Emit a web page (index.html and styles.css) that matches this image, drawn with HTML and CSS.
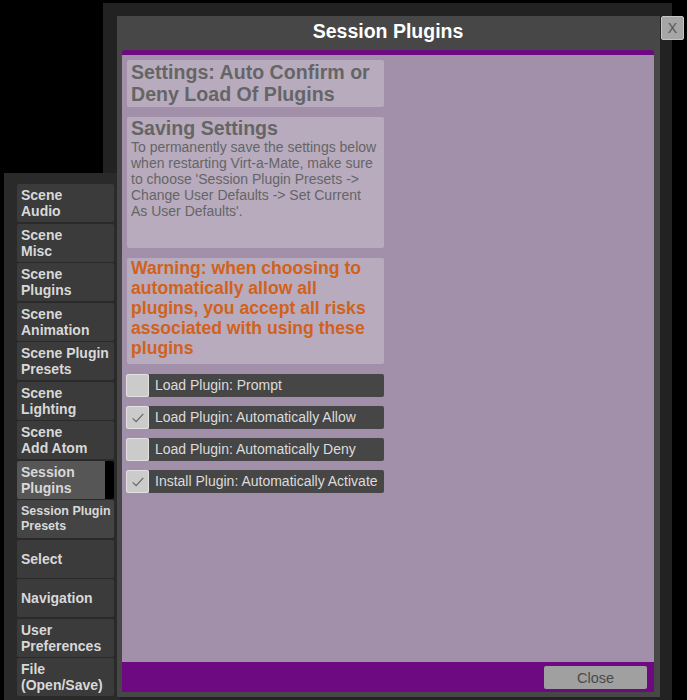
FILE: index.html
```html
<!DOCTYPE html>
<html lang="en">

<head>
    <meta charset="UTF-8">
    <title>Session Plugins</title>
    <link rel="stylesheet" href="styles.css">
</head>

<body>
    <div class="back-panel"></div>

    <nav class="side-panel">
        <button class="tab">Scene<br>Audio</button>
        <button class="tab">Scene<br>Misc</button>
        <button class="tab">Scene<br>Plugins</button>
        <button class="tab">Scene<br>Animation</button>
        <button class="tab">Scene Plugin<br>Presets</button>
        <button class="tab">Scene<br>Lighting</button>
        <button class="tab">Scene<br>Add Atom</button>
        <button class="tab active">Session<br>Plugins</button>
        <button class="tab small">Session Plugin<br>Presets</button>
        <button class="tab">Select</button>
        <button class="tab">Navigation</button>
        <button class="tab">User<br>Preferences</button>
        <button class="tab">File<br>(Open/Save)</button>
    </nav>

    <section class="dialog">
        <header class="dialog-title">Session Plugins</header>
        <div class="dialog-body">
            <div class="content">
                <div class="column">
                    <div class="box heading">
                        <h2>Settings: Auto Confirm or Deny Load Of Plugins</h2>
                    </div>
                    <div class="box saving">
                        <h2>Saving Settings</h2>
                        <p>To permanently save the settings below when restarting Virt-a-Mate, make sure to choose 'Session Plugin Presets -&gt; Change User Defaults -&gt; Set Current As User Defaults'.</p>
                    </div>
                    <div class="box warning">
                        <p>Warning: when choosing to automatically allow all plugins, you accept all risks associated with using these plugins</p>
                    </div>

                    <div class="toggles">
                        <label class="toggle">
                            <span class="check"></span>
                            <span class="toggle-text">Load Plugin: Prompt</span>
                        </label>
                        <label class="toggle">
                            <span class="check">
                                <svg viewBox="0 0 24 24" width="18" height="18"><path d="M5 12.5 L9.5 17 L19 6.5" fill="none" stroke="#666" stroke-width="1.6"/></svg>
                            </span>
                            <span class="toggle-text">Load Plugin: Automatically Allow</span>
                        </label>
                        <label class="toggle">
                            <span class="check"></span>
                            <span class="toggle-text">Load Plugin: Automatically Deny</span>
                        </label>
                        <label class="toggle">
                            <span class="check">
                                <svg viewBox="0 0 24 24" width="18" height="18"><path d="M5 12.5 L9.5 17 L19 6.5" fill="none" stroke="#666" stroke-width="1.6"/></svg>
                            </span>
                            <span class="toggle-text">Install Plugin: Automatically Activate</span>
                        </label>
                    </div>
                </div>
            </div>
            <div class="footer">
                <button class="close">Close</button>
            </div>
        </div>
    </section>

    <button class="x-button">X</button>
</body>

</html>
```

FILE: styles.css
```css
* {
    box-sizing: border-box;
    margin: 0;
    padding: 0;
    font-family: 'Liberation Sans', Arial, sans-serif;
}

body {
    background-color: #000;
    width: 687px;
    height: 700px;
    overflow: hidden;
    position: relative;
}

button {
    appearance: none;
    border: none;
    outline: none;
    font-family: inherit;
}

/* windows stacked on the desktop */
.back-panel {
    position: absolute;
    left: 103px;
    top: 3px;
    width: 569px;
    height: 700px;
    background-color: #222;
}

.side-panel {
    position: absolute;
    left: 4px;
    top: 173px;
    width: 116px;
    height: 530px;
    background-color: #2a2a2a;
    padding: 11px 0 0 13px;
    display: flex;
    flex-direction: column;
    gap: 1.5px;
}

.tab {
    width: 97px;
    height: 38px;
    border-radius: 2px;
    background-color: #3b3b3b;
    color: #d8d8d8;
    font-size: 14px;
    font-weight: 700;
    line-height: 16px;
    text-align: left;
    padding-left: 4px;
    display: flex;
    align-items: center;
    white-space: nowrap;
}

.tab.active {
    background-color: #565656;
    border-right: 9px solid #000;
}

.tab.small {
    font-size: 12.5px;
    line-height: 15px;
    background-color: #444;
}

.dialog {
    position: absolute;
    left: 117px;
    top: 16px;
    width: 543px;
    height: 681px;
    background-color: #474747;
    padding: 0 6px 5px 5px;
    display: flex;
    flex-direction: column;
}

.dialog-title {
    height: 34px;
    color: #fff;
    font-size: 19.5px;
    font-weight: 700;
    text-align: center;
    line-height: 30px;
}

.dialog-body {
    flex: 1 1 0%;
    display: flex;
    flex-direction: column;
    border-radius: 3px 3px 0 0;
    border-top: 5px solid #6d0a82;
    background-color: #6d0a82;
    overflow: hidden;
}

.content {
    flex: 1 1 0%;
    background-color: #a28fa9;
    padding: 5px 0 0 5px;
}

.column {
    width: 257px;
    display: flex;
    flex-direction: column;
    gap: 10px;
}

.box {
    background-color: #b8abbe;
    border-radius: 2px;
    padding: 1px 4px 0 4px;
    color: #656565;
}

.box h2 {
    font-size: 19.6px;
    font-weight: 700;
    line-height: 22px;
}

.box.heading {
    height: 47px;
}

.box.saving {
    height: 131px;
    padding-top: 0;
}

.box.saving p {
    font-size: 14px;
    line-height: 16px;
}

.box.warning {
    height: 106px;
    padding-top: 0;
}

.box.warning p {
    color: #d0621b;
    font-size: 17.6px;
    font-weight: 700;
    line-height: 20px;
}

.toggles {
    display: flex;
    flex-direction: column;
    gap: 9px;
    margin-left: -1px;
}

.toggle {
    display: flex;
    height: 23px;
    width: 258px;
}

.check {
    width: 23px;
    height: 23px;
    background-color: #cbcbcb;
    border: 1px solid #e2e2e2;
    border-radius: 2px;
    display: flex;
    align-items: center;
    justify-content: center;
}

.toggle-text {
    flex: 1 1 0%;
    background-color: #464646;
    border-radius: 0 2px 2px 0;
    color: #dcdcdc;
    font-size: 14px;
    line-height: 23px;
    padding-left: 6px;
}

.footer {
    height: 30px;
    display: flex;
    justify-content: flex-end;
    padding: 4px 7px 0 0;
}

.close {
    width: 103px;
    height: 23px;
    border-radius: 2px;
    background-color: #a0a0a0;
    color: #4a4a4a;
    font-size: 14.5px;
}

.x-button {
    position: absolute;
    left: 661px;
    top: 16px;
    width: 23px;
    height: 24px;
    background-color: #a6a6a6;
    border: 1px solid #c4c4c4;
    border-radius: 2px;
    color: #555;
    font-size: 14px;
}
```
